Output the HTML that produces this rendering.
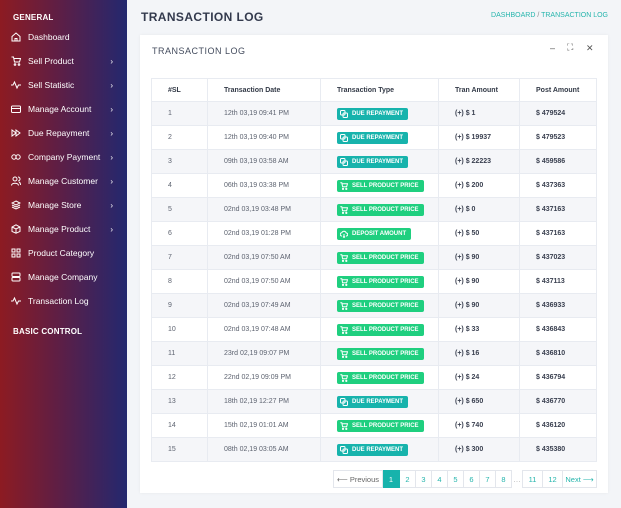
<!DOCTYPE html>
<html><head><meta charset="utf-8"><style>
*{box-sizing:border-box;margin:0;padding:0}
body{width:621px;height:508px;overflow:hidden;font-family:"Liberation Sans",sans-serif;background:#f3f5f8;position:relative}
.sb{position:absolute;left:0;top:0;width:127px;height:508px;background:linear-gradient(90deg,#8d1b22 0%,#5a1f48 50%,#23286f 100%);color:#fff}
.sb .h{position:absolute;left:13px;font-size:8px;font-weight:bold;letter-spacing:.2px}
.sb .it{position:absolute;left:11px;width:110px;height:14px;font-size:8.5px;display:flex;align-items:center}
.sb .it svg{width:10px;height:10px;margin-right:7px;flex:none}
.sb .it .ar{position:absolute;right:8px;font-size:8px}
.title{position:absolute;left:141px;top:10px;font-size:12px;letter-spacing:.4px;color:#333a4d;font-weight:bold}
.bc{position:absolute;right:13px;top:12px;font-size:7px;color:#26b5ad}
.bc span{color:#888}
.card{position:absolute;left:140px;top:35px;width:468px;height:458px;background:#fff;box-shadow:0 0 3px rgba(0,0,0,.06)}
.ct{position:absolute;left:12px;top:11px;font-size:9px;letter-spacing:.5px;color:#444c5e}
.ctl{position:absolute;top:8px;font-size:9px;color:#555}
table{position:absolute;left:11px;top:43px;width:446px;border-collapse:collapse;font-size:7px;color:#5d6370}
td,th{border:1px solid #e8ebf1;height:24px;padding-left:16px;text-align:left}
th{height:23px;font-weight:bold;color:#333a47}
tr:nth-child(even) td{background:#f5f6f9}
td.b{font-weight:bold;color:#3a4050}
.bd{display:inline-flex;align-items:center;height:12px;padding:0 5px 0 3px;border-radius:2px;color:#fff;font-size:6px;font-weight:bold;line-height:12px;vertical-align:middle}
.bd svg{width:8px;height:8px;margin-right:4px}
.t{background:#17b3ac}.g{background:#1fcf7f}
.pg{position:absolute;top:470px;display:flex;font-size:7.5px;color:#26b5ad}
.pg div{height:18px;border:1px solid #e3e6ec;border-left:none;display:flex;align-items:center;justify-content:center;background:#fff}
</style></head><body>
<div class="sb">
<div class="h" style="top:13px">GENERAL</div>
<div class="it" style="top:30px"><svg viewBox="0 0 10 10" fill="none" stroke="#fff"><path d="M1 4.5L5 1l4 3.5V9H1z M4 9V6.5h2V9"/></svg>Dashboard</div>
<div class="it" style="top:54px"><svg viewBox="0 0 10 10" fill="none" stroke="#fff"><path d="M.5 1h2l1 5h5l1-3.5H3"/><circle cx="4" cy="8.5" r=".8"/><circle cx="8" cy="8.5" r=".8"/></svg>Sell Product<span class="ar">›</span></div>
<div class="it" style="top:78px"><svg viewBox="0 0 10 10" fill="none" stroke="#fff"><path d="M0 5h2l1.5-3 2.5 6 1.5-3H10"/></svg>Sell Statistic<span class="ar">›</span></div>
<div class="it" style="top:102px"><svg viewBox="0 0 10 10" fill="none" stroke="#fff"><rect x=".5" y="2" width="9" height="6.5" rx="1"/><path d="M.5 4.5h9"/></svg>Manage Account<span class="ar">›</span></div>
<div class="it" style="top:126px"><svg viewBox="0 0 10 10" fill="none" stroke="#fff"><path d="M1 2l4 3-4 3zM5 2l4 3-4 3z"/></svg>Due Repayment<span class="ar">›</span></div>
<div class="it" style="top:150px"><svg viewBox="0 0 10 10" fill="none" stroke="#fff"><circle cx="3" cy="5" r="2.2"/><circle cx="7" cy="5" r="2.2"/></svg>Company Payment<span class="ar">›</span></div>
<div class="it" style="top:174px"><svg viewBox="0 0 10 10" fill="none" stroke="#fff"><circle cx="4" cy="3" r="2"/><path d="M0.5 9.5c0-3 7-3 7 0M7 1a2 2 0 010 4M8 6c1 .5 1.5 1.5 1.5 3"/></svg>Manage Customer<span class="ar">›</span></div>
<div class="it" style="top:198px"><svg viewBox="0 0 10 10" fill="none" stroke="#fff"><path d="M5 1l4 2-4 2-4-2zM1 5l4 2 4-2M1 7l4 2 4-2"/></svg>Manage Store<span class="ar">›</span></div>
<div class="it" style="top:222px"><svg viewBox="0 0 10 10" fill="none" stroke="#fff"><path d="M5 .8l4 2.2v4.4L5 9.2 1 7.4V3zM1 3l4 2 4-2M5 5v4"/></svg>Manage Product<span class="ar">›</span></div>
<div class="it" style="top:246px"><svg viewBox="0 0 10 10" fill="none" stroke="#fff"><rect x="1" y="1" width="3" height="3"/><rect x="6" y="1" width="3" height="3"/><rect x="1" y="6" width="3" height="3"/><rect x="6" y="6" width="3" height="3"/></svg>Product Category</div>
<div class="it" style="top:270px"><svg viewBox="0 0 10 10" fill="none" stroke="#fff"><rect x="1" y="1" width="8" height="3.5" rx=".7"/><rect x="1" y="5.5" width="8" height="3.5" rx=".7"/></svg>Manage Company</div>
<div class="it" style="top:294px"><svg viewBox="0 0 10 10" fill="none" stroke="#fff"><path d="M0 5h2l1.5-3 2.5 6 1.5-3H10"/></svg>Transaction Log</div>
<div class="h" style="top:327px">BASIC CONTROL</div>
</div>
<div class="title">TRANSACTION LOG</div>
<div class="bc">DASHBOARD <span>/</span> TRANSACTION LOG</div>
<div class="card">
<div class="ct">TRANSACTION LOG</div>
<div class="ctl" style="left:410px">–</div>
<div class="ctl" style="left:427px;top:7px">⛶</div>
<div class="ctl" style="left:446px">✕</div>
<table>
<tr><th style="width:56px">#SL</th><th style="width:113px">Transaction Date</th><th style="width:118px">Transaction Type</th><th style="width:81px">Tran Amount</th><th>Post Amount</th></tr>
</table>
</div>
<div class="pg" style="left:333px">
<div style="width:50px;border-left:1px solid #e3e6ec;color:#666">⟵ Previous</div>
<div style="width:17px;background:#17b3ac;color:#fff;border-color:#17b3ac">1</div>
<div style="width:16px">2</div><div style="width:16px">3</div><div style="width:16px">4</div><div style="width:16px">5</div><div style="width:16px">6</div><div style="width:16px">7</div><div style="width:16px">8</div>
<div style="width:10px;border:none;background:none;color:#aaa">…</div>
<div style="width:21px;border-left:1px solid #e3e6ec">11</div><div style="width:20px">12</div><div style="width:34px">Next ⟶</div>
</div>
<script>
const rows=[["12th 03,19 09:41 PM","d","1","479524"],["12th 03,19 09:40 PM","d","19937","479523"],["09th 03,19 03:58 AM","d","22223","459586"],["06th 03,19 03:38 PM","s","200","437363"],["02nd 03,19 03:48 PM","s","0","437163"],["02nd 03,19 01:28 PM","p","50","437163"],["02nd 03,19 07:50 AM","s","90","437023"],["02nd 03,19 07:50 AM","s","90","437113"],["02nd 03,19 07:49 AM","s","90","436933"],["02nd 03,19 07:48 AM","s","33","436843"],["23rd 02,19 09:07 PM","s","16","436810"],["22nd 02,19 09:09 PM","s","24","436794"],["18th 02,19 12:27 PM","d","650","436770"],["15th 02,19 01:01 AM","s","740","436120"],["08th 02,19 03:05 AM","d","300","435380"]];
const ic={d:'<svg viewBox="0 0 8 8" fill="none" stroke="#fff"><rect x=".5" y=".5" width="4.5" height="4.5" rx="1"/><rect x="3" y="3" width="4.5" height="4.5" rx="1"/></svg>',s:'<svg viewBox="0 0 8 8" fill="none" stroke="#fff"><path d="M.3 .8h1.5l.8 4h4l.9-3H2.2"/><circle cx="3" cy="6.9" r=".6"/><circle cx="6.3" cy="6.9" r=".6"/></svg>',p:'<svg viewBox="0 0 8 8" fill="none" stroke="#fff"><path d="M2 6H1.8a1.6 1.6 0 010-3.2A2.3 2.3 0 016.2 3a1.5 1.5 0 01.1 3H6M4 4v3.5M3 6.5l1 1 1-1"/></svg>'};
const lb={d:"DUE REPAYMENT",s:"SELL PRODUCT PRICE",p:"DEPOSIT AMOUNT"};
let h="";rows.forEach((r,i)=>{h+=`<tr><td>${i+1}</td><td>${r[0]}</td><td><span class="bd ${r[1]=='d'?'t':'g'}">${ic[r[1]]}${lb[r[1]]}</span></td><td class="b">(+) $ ${r[2]}</td><td class="b">$ ${r[3]}</td></tr>`});
document.querySelector("tbody").insertAdjacentHTML("beforeend",h);
</script>
</body></html>
